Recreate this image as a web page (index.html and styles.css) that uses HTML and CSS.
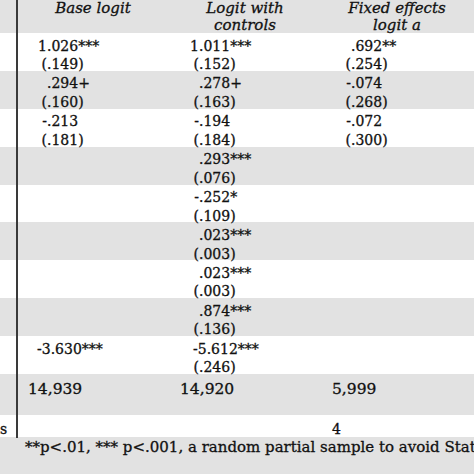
FILE: index.html
```html
<!DOCTYPE html>
<html>
<head>
<meta charset="utf-8">
<link rel="stylesheet" href="styles.css">
</head>
<body>
<div class="sheet">
  <div class="band head grey">
    <div class="lab"></div>
    <div class="col"><div class="ln">Base logit</div></div>
    <div class="col"><div class="ln">Logit with</div><div class="ln">controls</div></div>
    <div class="col"><div class="ln">Fixed effects</div><div class="ln">logit a</div></div>
  </div>
  <div class="band">
    <div class="lab"></div>
    <div class="col"><div><span class="w">1</span>.026***</div><div><span class="w">(</span>.149)</div></div>
    <div class="col"><div><span class="w">1</span>.011***</div><div><span class="w">(</span>.152)</div></div>
    <div class="col"><div><span class="w"></span>.692**</div><div><span class="w">(</span>.254)</div></div>
  </div>
  <div class="band grey">
    <div class="lab"></div>
    <div class="col"><div><span class="w"></span>.294+</div><div><span class="w">(</span>.160)</div></div>
    <div class="col"><div><span class="w"></span>.278+</div><div><span class="w">(</span>.163)</div></div>
    <div class="col"><div><span class="w">-</span>.074</div><div><span class="w">(</span>.268)</div></div>
  </div>
  <div class="band">
    <div class="lab"></div>
    <div class="col"><div><span class="w">-</span>.213</div><div><span class="w">(</span>.181)</div></div>
    <div class="col"><div><span class="w">-</span>.194</div><div><span class="w">(</span>.184)</div></div>
    <div class="col"><div><span class="w">-</span>.072</div><div><span class="w">(</span>.300)</div></div>
  </div>
  <div class="band grey">
    <div class="lab"></div>
    <div class="col"></div>
    <div class="col"><div><span class="w"></span>.293***</div><div><span class="w">(</span>.076)</div></div>
    <div class="col"></div>
  </div>
  <div class="band">
    <div class="lab"></div>
    <div class="col"></div>
    <div class="col"><div><span class="w">-</span>.252*</div><div><span class="w">(</span>.109)</div></div>
    <div class="col"></div>
  </div>
  <div class="band grey">
    <div class="lab"></div>
    <div class="col"></div>
    <div class="col"><div><span class="w"></span>.023***</div><div><span class="w">(</span>.003)</div></div>
    <div class="col"></div>
  </div>
  <div class="band">
    <div class="lab"></div>
    <div class="col"></div>
    <div class="col"><div><span class="w"></span>.023***</div><div><span class="w">(</span>.003)</div></div>
    <div class="col"></div>
  </div>
  <div class="band grey">
    <div class="lab"></div>
    <div class="col"></div>
    <div class="col"><div><span class="w"></span>.874***</div><div><span class="w">(</span>.136)</div></div>
    <div class="col"></div>
  </div>
  <div class="band">
    <div class="lab"></div>
    <div class="col"><div class="const-a">-3.630***</div></div>
    <div class="col"><div class="const-b">-5.612***</div><div><span class="w">(</span>.246)</div></div>
    <div class="col"></div>
  </div>
  <div class="band nrow grey">
    <div class="lab"></div>
    <div class="col">14,939</div>
    <div class="col">14,920</div>
    <div class="col">5,999</div>
  </div>
  <div class="band grp">
    <div class="lab">s</div>
    <div class="col"></div>
    <div class="col"></div>
    <div class="col">4</div>
  </div>
  <div class="note grey">**p&lt;.01, *** p&lt;.001, a random partial sample to avoid Stat</div>
</div>
</body>
</html>
```
FILE: styles.css
```css
html, body {
  margin: 0;
  padding: 0;
  background: #ffffff;
}
body {
  width: 474px;
  height: 474px;
  overflow: hidden;
  font-family: "DejaVu Serif", serif;
  font-size: 14px;
  color: #111111;
  -webkit-text-stroke: 0.3px #111111;
}
.band {
  display: grid;
  grid-template-columns: 18px 152px 152px 152px;
  height: 37.9px;
  box-sizing: border-box;
}
.band > div {
  padding-top: 3.6px;
  line-height: 18.5px;
  white-space: nowrap;
}
.grey {
  background: #e2e2e2;
}
.lab {
  border-right: 2px solid #3a3a3a;
  text-align: left;
}
.col {
  padding-left: 10px;
}
.w {
  display: inline-block;
  width: 19px;
  text-align: right;
}
.head {
  height: 33px;
}
.head > div {
  padding-top: 0;
  line-height: 16.5px;
}
.head .ln {
  width: 130px;
  text-align: center;
  font-style: italic;
  font-size: 15px;
}
.const-a {
  padding-left: 9px;
}
.const-b {
  padding-left: 13px;
}
.nrow {
  height: 40.9px;
}
.nrow > div {
  padding-top: 6.3px;
}
.nrow .col {
  font-size: 15.5px;
}
.grp {
  height: 22px;
}
.grp > div {
  padding-top: 4.9px;
}
.note {
  height: 40px;
  box-sizing: border-box;
  padding-top: 0.6px;
  padding-left: 25px;
  font-size: 15px;
  line-height: 18.5px;
  white-space: nowrap;
}
```
